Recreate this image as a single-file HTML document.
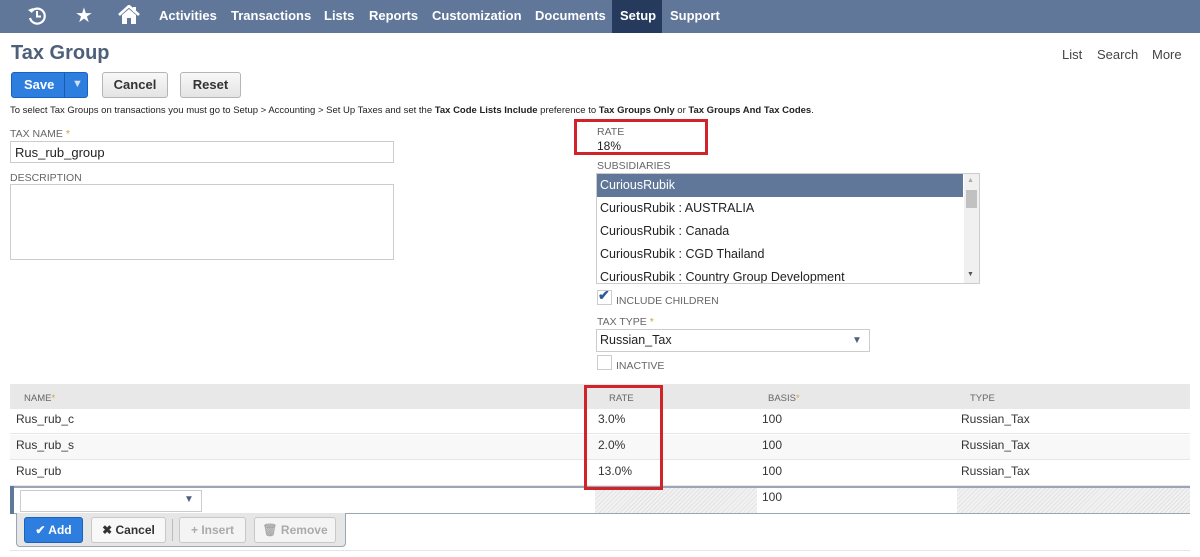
<!DOCTYPE html>
<html><head><style>
*{margin:0;padding:0;box-sizing:border-box}
body{width:1200px;height:557px;background:#fff;font-family:"Liberation Sans",Arial,sans-serif;position:relative;overflow:hidden;color:#222}
.a{position:absolute}
.nav{left:0;top:0;width:1200px;height:33px;background:#607799}
.nv{top:8px;color:#fff;font-weight:bold;font-size:13px}
.lbl{font-size:10.5px;color:#666}
.star{color:#c9a53a}
.btn{position:absolute;border:1px solid #b5b5b5;border-radius:3px;background:linear-gradient(#f8f8f8,#e4e4e4);font-weight:bold;font-size:13px;color:#333;text-align:center;line-height:24px}
.inp{position:absolute;border:1px solid #ccc;background:#fff}
.row{position:absolute;left:10px;width:1180px;height:25px;border-bottom:1px solid #e6e6e6;font-size:12px;color:#333}
.row span{position:absolute;top:3px}
.hatch{position:absolute;background:repeating-linear-gradient(135deg,#f2f2f2 0 2px,#e2e2e2 2px 3px)}
.sb{position:absolute;height:26px;border:1px solid #c8c8c8;border-radius:3px;background:#f4f4f4;font-size:12px;font-weight:bold;line-height:24px;text-align:center}
</style></head><body>
<div class="a nav"></div>
<svg class="a" style="left:27px;top:6px" width="20" height="20" viewBox="0 0 20 20"><path d="M4 6 A7.5 7.5 0 1 1 3 12" fill="none" stroke="#fff" stroke-width="2.2"/><path d="M1 4 L5 7 L6 2" fill="#fff"/><path d="M10 5 V10.5 H14" fill="none" stroke="#fff" stroke-width="2"/></svg>
<div class="a" style="left:75px;top:3px;color:#fff;font-size:20px">★</div>
<svg class="a" style="left:118px;top:5px" width="22" height="20" viewBox="0 0 22 20"><path d="M1 10 L11 1 L21 10" fill="none" stroke="#fff" stroke-width="2.6"/><path d="M4 10 V19 H9 V13 H13 V19 H18 V10 L11 4 Z" fill="#fff"/><rect x="15" y="2" width="3" height="5" fill="#fff"/></svg>
<div class="a nv" style="left:159px">Activities</div>
<div class="a nv" style="left:231px">Transactions</div>
<div class="a nv" style="left:324px">Lists</div>
<div class="a nv" style="left:369px">Reports</div>
<div class="a nv" style="left:432px">Customization</div>
<div class="a nv" style="left:535px">Documents</div>
<div class="a" style="left:612px;top:0;width:50px;height:33px;background:#263a5e"></div>
<div class="a nv" style="left:620px">Setup</div>
<div class="a nv" style="left:670px">Support</div>

<div class="a" style="left:11px;top:42px;font-size:20px;font-weight:bold;color:#4d5f79">Tax Group</div>
<div class="a" style="left:1062px;top:47px;font-size:13px;color:#444">List</div>
<div class="a" style="left:1097px;top:47px;font-size:13px;color:#444">Search</div>
<div class="a" style="left:1152px;top:47px;font-size:13px;color:#444">More</div>

<div class="a" style="left:11px;top:72px;width:77px;height:26px;border-radius:3px;background:#2e7ee0;border:1px solid #1a62bf"></div>
<div class="a" style="left:24px;top:77px;color:#fff;font-weight:bold;font-size:13px">Save</div>
<div class="a" style="left:64px;top:73px;width:1px;height:24px;background:#1a5bb0"></div>
<div class="a" style="left:72px;top:78px;color:#cfe0f7;font-size:11px">▼</div>
<div class="btn" style="left:102px;top:72px;width:66px;height:26px">Cancel</div>
<div class="btn" style="left:180px;top:72px;width:61px;height:26px">Reset</div>

<div class="a" style="left:10px;top:105px;font-size:9.5px;color:#222;white-space:nowrap">To select Tax Groups on transactions you must go to Setup &gt; Accounting &gt; Set Up Taxes and set the <b>Tax Code Lists Include</b> preference to <b>Tax Groups Only</b> or <b>Tax Groups And Tax Codes</b>.</div>

<div class="a lbl" style="left:10px;top:128px">TAX NAME <span class="star">*</span></div>
<div class="inp" style="left:10px;top:141px;width:384px;height:22px"></div>
<div class="a" style="left:15px;top:145px;font-size:13px">Rus_rub_group</div>
<div class="a lbl" style="left:10px;top:172px">DESCRIPTION</div>
<div class="inp" style="left:10px;top:184px;width:384px;height:76px"></div>

<div class="a" style="left:574px;top:119px;width:134px;height:36px;border:3px solid #d0242a"></div>
<div class="a lbl" style="left:597px;top:126px">RATE</div>
<div class="a" style="left:597px;top:139px;font-size:12px">18%</div>
<div class="a lbl" style="left:597px;top:160px">SUBSIDIARIES</div>
<div class="inp" style="left:596px;top:173px;width:384px;height:111px;overflow:hidden">
<div style="background:#607799;color:#fff;height:23px;width:366px;font-size:12.5px;padding:4px 3px">CuriousRubik</div>
<div style="height:23px;font-size:12.5px;padding:4px 3px">CuriousRubik : AUSTRALIA</div>
<div style="height:23px;font-size:12.5px;padding:4px 3px">CuriousRubik : Canada</div>
<div style="height:23px;font-size:12.5px;padding:4px 3px">CuriousRubik : CGD Thailand</div>
<div style="height:23px;font-size:12.5px;padding:4px 3px">CuriousRubik : Country Group Development</div>
<div style="position:absolute;left:367px;top:0;width:16px;height:110px;background:#f0f0f0"></div>
<div style="position:absolute;left:369px;top:16px;width:11px;height:18px;background:#c1c1c1"></div>
<div style="position:absolute;left:370px;top:97px;font-size:7px;color:#555">▼</div>
<div style="position:absolute;left:370px;top:3px;font-size:7px;color:#aaa">▲</div>
</div>
<div class="inp" style="left:597px;top:290px;width:15px;height:15px"></div>
<div class="a" style="left:598px;top:287px;color:#2e5a9a;font-size:14px;font-weight:bold">✔</div>
<div class="a lbl" style="left:616px;top:295px">INCLUDE CHILDREN</div>
<div class="a lbl" style="left:597px;top:316px">TAX TYPE <span class="star">*</span></div>
<div class="inp" style="left:596px;top:329px;width:274px;height:23px"></div>
<div class="a" style="left:600px;top:333px;font-size:12.5px">Russian_Tax</div>
<div class="a" style="left:852px;top:335px;font-size:10px;color:#50617e">▼</div>
<div class="inp" style="left:597px;top:355px;width:15px;height:15px"></div>
<div class="a lbl" style="left:616px;top:360px">INACTIVE</div>

<div class="a" style="left:10px;top:384px;width:1180px;height:25px;background:#e8e8e8"></div>
<div class="a" style="left:24px;top:393px;font-size:9.5px;color:#666">NAME<span class="star">*</span></div>
<div class="a" style="left:609px;top:393px;font-size:9.5px;color:#666">RATE</div>
<div class="a" style="left:768px;top:393px;font-size:9.5px;color:#666">BASIS<span class="star">*</span></div>
<div class="a" style="left:970px;top:393px;font-size:9.5px;color:#666">TYPE</div>
<div class="row" style="top:409px"><span style="left:6px">Rus_rub_c</span><span style="left:588px">3.0%</span><span style="left:752px">100</span><span style="left:951px">Russian_Tax</span></div>
<div class="row" style="top:435px;background:#f8f8f8"><span style="left:6px">Rus_rub_s</span><span style="left:588px">2.0%</span><span style="left:752px">100</span><span style="left:951px">Russian_Tax</span></div>
<div class="row" style="top:461px"><span style="left:6px">Rus_rub</span><span style="left:588px">13.0%</span><span style="left:752px">100</span><span style="left:951px">Russian_Tax</span></div>
<div class="a" style="left:10px;top:486px;width:1180px;height:28px;border-top:2px solid #9aa5b5;border-bottom:1px solid #9aa5b5;background:#fff"></div>
<div class="a" style="left:10px;top:486px;width:4px;height:28px;background:#607799"></div>
<div class="hatch" style="left:595px;top:488px;width:162px;height:25px"></div>
<div class="hatch" style="left:957px;top:488px;width:233px;height:25px"></div>
<div class="inp" style="left:20px;top:490px;width:182px;height:22px"></div>
<div class="a" style="left:184px;top:494px;font-size:10px;color:#50617e">▼</div>
<div class="a" style="left:762px;top:490px;font-size:12px;color:#333">100</div>
<div class="a" style="left:584px;top:385px;width:79px;height:105px;border:3px solid #d0242a"></div>

<div class="a" style="left:16px;top:513px;width:330px;height:34px;background:#e6e6e6;border:1px solid #9aa5b5;border-top:none;border-radius:0 0 4px 4px"></div>
<div class="sb" style="left:24px;top:517px;width:59px;background:#2e7ee0;border-color:#1a62bf;color:#fff">✔ Add</div>
<div class="sb" style="left:91px;top:517px;width:75px;background:#f8f8f8;color:#333">✖ Cancel</div>
<div class="a" style="left:172px;top:519px;width:1px;height:22px;background:#bbb"></div>
<div class="sb" style="left:179px;top:517px;width:67px;color:#aaa">+ Insert</div>
<div class="sb" style="left:254px;top:517px;width:82px;color:#aaa">🗑 Remove</div>
<div class="a" style="left:10px;top:550px;width:1180px;height:1px;background:#e6e6e6"></div>
</body></html>
